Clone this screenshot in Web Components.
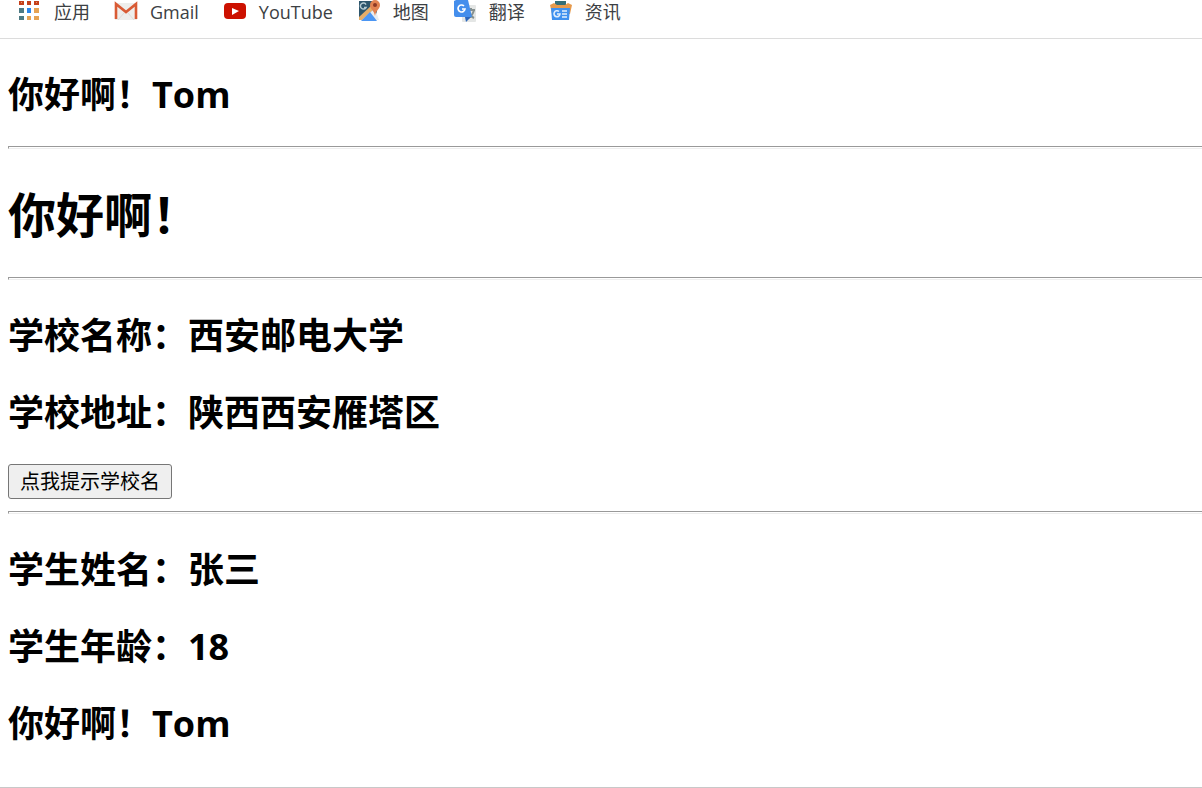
<!DOCTYPE html>
<html lang="zh-CN">
<head>
<meta charset="utf-8">
<title>学校与学生</title>
<style>
body { margin: 0; background: #fff; color: #000; font-family: "Open Sans", "Noto Sans CJK SC", sans-serif; }
</style>
</head>
<body>
<app-page>
  <bookmarks-bar slot="bar">
    <bookmark-link label="应用"><svg viewBox="0 0 24 24" width="24" height="24" aria-hidden="true"><g fill="#c5401a"><path d="M1 1h5v4H1zM9 1h4v4H9zM16 1h5v4h-5z"/></g><g fill="#4d7a84"><path d="M1 8h5v5H1zM1 16h5v4H1z"/></g><path fill="#2b86ea" d="M9 8h4v5H9z"/><path fill="#e6a353" d="M16 8h5v5h-5zM9 16h4v4H9zM16 16h5v4h-5z"/><path fill="#e69a70" d="M3 2h1v1H3zM18 2h1v1h-1z"/></svg></bookmark-link>
    <bookmark-link label="Gmail"><svg viewBox="0 0 24 24" width="24" height="24" aria-hidden="true"><path fill="#eeeeec" d="M1 3h22v17H1z"/><path d="M4 20l6-7M20 20l-6-7" stroke="#dddddb"/><path d="M2 19V4l10 8 10-8v15" fill="none" stroke="#d95b35" stroke-width="2.600"/></svg></bookmark-link>
    <bookmark-link label="YouTube"><svg viewBox="0 0 24 24" width="24" height="24" aria-hidden="true"><rect x="1" y="3" width="22" height="16" rx="4" fill="#cc1100"/><path fill="#fff" d="M9 8l7 3-7 4z"/></svg></bookmark-link>
    <bookmark-link label="地图"><svg viewBox="0 0 24 24" width="24" height="24" aria-hidden="true"><path fill="#2e566c" d="M2 1h18v19H2z"/><path fill="#e5ad68" d="M2 20V17L15 5l3 3L6 20z"/><path fill="#e9eef0" d="M5 20L18 8l4 12z"/><path fill="#4b96f3" d="M4 21l9-9 7 9z"/><path d="M9 4.500a3 3 0 1 0 0 3H7" fill="none" stroke="#b7cbd2" stroke-width="1.500"/><path fill="#e28351" d="M13 5a5 5 0 0 1 10 0c0 4-4 5-5 11-1-6-5-7-5-11z"/><circle cx="18" cy="5" r="2" fill="#8e3924"/></svg></bookmark-link>
    <bookmark-link label="翻译"><svg viewBox="0 0 24 24" width="24" height="24" aria-hidden="true"><rect x="9" y="5" width="14" height="17" rx="1" fill="#e4e6e5"/><path d="M14 10h8M18 8v2M21 10c-1 4-3 7-6 8M16 13c1 3 3 4 5 5" fill="none" stroke="#86908f" stroke-width="2"/><path fill="#448eec" d="M3 0h12l4 17H3a2 2 0 0 1-2-2V1z"/><path fill="#2b66bc" d="M12 17h6l-5 5z"/><path d="M11 6a3.500 3.500 0 1 0 1 3H9" fill="none" stroke="#fff" stroke-width="1.700"/></svg></bookmark-link>
    <bookmark-link label="资讯"><svg viewBox="0 0 24 24" width="24" height="24" aria-hidden="true"><path fill="#346e77" d="M6 1h11v6H6z"/><path fill="#e69a4d" d="M1 5l4-2 3 2h8l3-2 4 2-2 9H3z"/><path d="M2 8h19l-1 12H3z" fill="#3f91ef"/><path d="M10 11.500a3 3 0 1 0 1 2.500H8M13 11h5M13 14h5M13 17h5" fill="none" stroke="#e2effd" stroke-width="1.600"/></svg></bookmark-link>
  </bookmarks-bar>
  <greeting-line>你好啊！Tom</greeting-line>
  <section-rule></section-rule>
  <page-title>你好啊！</page-title>
  <section-rule></section-rule>
  <school-card name="西安邮电大学" address="陕西西安雁塔区"></school-card>
  <section-rule></section-rule>
  <student-card name="张三" age="18"></student-card>
  <greeting-line>你好啊！Tom</greeting-line>
</app-page>
<script>
const headingStyle = `
  :host { display: block; }
  h2 { margin: 30px 0; padding-top: 4px; font-size: 36px; line-height: 43px; font-weight: 700; }
`;

function define(tag, render) {
  customElements.define(tag, class extends HTMLElement {
    constructor() {
      super();
      this.attachShadow({ mode: "open" });
    }
    connectedCallback() {
      this.shadowRoot.innerHTML = render(this);
      const button = this.shadowRoot.querySelector("button");
      if (button) button.addEventListener("click", () => alert(this.getAttribute("name")));
    }
  });
}

define("app-page", () => `
  <style>
    :host { display: flex; flex-direction: column; box-sizing: border-box; min-height: 100vh; border-bottom: 1px solid #c8c8c8; }
    main { padding-left: 8px; display: flow-root; }
  </style>
  <slot name="bar"></slot>
  <main><slot></slot></main>`);

define("bookmarks-bar", () => `
  <style>
    :host { display: block; border-bottom: 1px solid #dcdcdc; }
    nav { display: flex; gap: 24px; padding: 0 18px 14px; }
  </style>
  <nav aria-label="书签"><slot></slot></nav>`);

define("bookmark-link", el => `
  <style>
    :host { display: block; }
    a { display: flex; gap: 12px; color: #3c4043; text-decoration: none; font-size: 18px; line-height: 24px; font-family: "Open Sans", "Noto Sans CJK SC", sans-serif; white-space: nowrap; }
    ::slotted(svg) { display: block; }
  </style>
  <a href="#"><slot></slot><span>${el.getAttribute("label")}</span></a>`);

define("section-rule", () => `
  <style>
    :host { display: block; }
    hr { height: 1px; margin: 0; border-style: solid; border-width: 1px 0 1px 1px; border-color: #999 #eee #eee #999; }
  </style>
  <hr>`);

define("greeting-line", () => `<style>${headingStyle}</style><h2><slot></slot></h2>`);

define("page-title", () => `
  <style>
    :host { display: block; }
    h1 { margin: 32px 0; padding-top: 4px; font-size: 48px; line-height: 60px; font-weight: 700; }
  </style>
  <h1><slot></slot></h1>`);

define("school-card", el => `
  <style>
    ${headingStyle}
    :host { padding-bottom: 12px; }
    button { display: block; box-sizing: border-box; height: 35px; padding: 0 11px; border: 1px solid #767676; border-radius: 3px; background: #efefef; color: #000; font-family: "Open Sans", "Noto Sans CJK SC", sans-serif; font-size: 20px; line-height: 32px; }
  </style>
  <h2>学校名称：${el.getAttribute("name")}</h2>
  <h2>学校地址：${el.getAttribute("address")}</h2>
  <button type="button">点我提示学校名</button>`);

define("student-card", el => `
  <style>${headingStyle}</style>
  <h2>学生姓名：${el.getAttribute("name")}</h2>
  <h2>学生年龄：${el.getAttribute("age")}</h2>`);
</script>
</body>
</html>
